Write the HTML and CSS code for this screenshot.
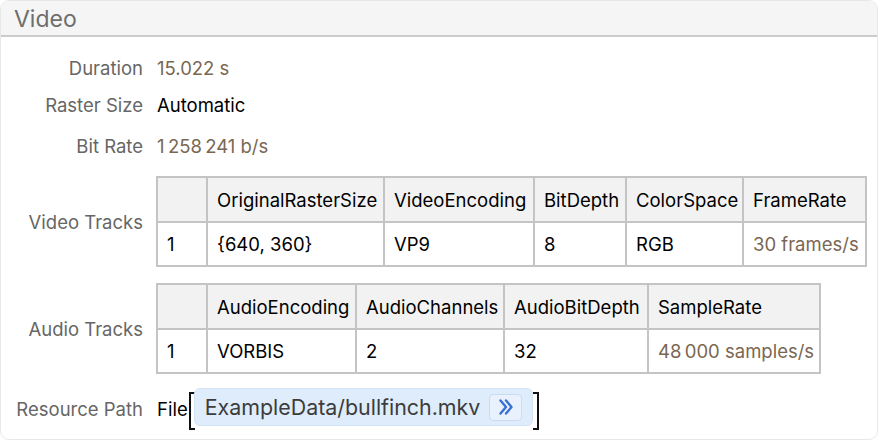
FILE: index.html
```html
<!DOCTYPE html>
<html>
<head>
<meta charset="utf-8">
<link rel="stylesheet" href="styles.css">
</head>
<body>
<div class="panel">
  <div class="head">Video</div>
  <div class="grid">
    <div class="lbl r1">Duration</div>
    <div class="val r1 qty">15.022 s</div>
    <div class="lbl r2">Raster Size</div>
    <div class="val r2">Automatic</div>
    <div class="lbl r3">Bit Rate</div>
    <div class="val r3 qty">1&#8239;258&#8239;241 b/s</div>
    <div class="lbl r4">Video Tracks</div>
    <div class="val r4">
      <table class="tbl">
        <tr class="th"><td class="idx"></td><td class="c1">OriginalRasterSize</td><td class="c2">VideoEncoding</td><td class="c3">BitDepth</td><td class="c4">ColorSpace</td><td class="c5">FrameRate</td></tr>
        <tr class="td"><td class="idx">1</td><td>{640, 360}</td><td>VP9</td><td>8</td><td>RGB</td><td class="qty">30 frames/s</td></tr>
      </table>
    </div>
    <div class="lbl r5">Audio Tracks</div>
    <div class="val r5">
      <table class="tbl">
        <tr class="th"><td class="idx"></td><td class="a1">AudioEncoding</td><td class="a2">AudioChannels</td><td class="a3">AudioBitDepth</td><td class="a4">SampleRate</td></tr>
        <tr class="td"><td class="idx">1</td><td>VORBIS</td><td>2</td><td>32</td><td class="qty">48&#8239;000 samples/s</td></tr>
      </table>
    </div>
    <div class="lbl r6">Resource Path</div>
    <div class="val r6 res">
      <span class="file">File</span>
      <span class="brk left"></span>
      <span class="pathbox">
        <span class="path">ExampleData/bullfinch.mkv</span>
        <span class="btn"><svg width="18" height="18" viewBox="0 0 18 18"><path d="M3.5 2.5 L9 9 L3.5 15.5 M9 2.5 L14.5 9 L9 15.5" fill="none" stroke="#3b6fd4" stroke-width="2.4" stroke-linecap="round" stroke-linejoin="round"/></svg></span>
      </span>
      <span class="brk right"></span>
    </div>
  </div>
</div>
</body>
</html>
```
FILE: styles.css
```css
html, body { margin: 0; padding: 0; background: #fff; }
body { font-family: Inter, "Noto Sans", sans-serif; font-size: 18.5px; color: #000; }
.panel {
  width: 878px; height: 440px; box-sizing: border-box;
  border: 1px solid #e8e8e8; border-radius: 9px; overflow: hidden;
}
.head {
  height: 34px; background: #f5f5f5; border-bottom: 2px solid #cbcbcb;
  color: #6e6e6e; font-size: 23px; line-height: 36px; padding-left: 13px;
}
.grid {
  display: grid; grid-template-columns: 142px auto; column-gap: 14px;
  grid-template-rows: 36px 38px 44px auto auto auto;
  padding-top: 13px;
}
.lbl { color: #666; text-align: right; align-self: center; }
.val { align-self: center; justify-self: start; }
.qty { color: #7a6753; }
.r4 { margin-top: 8px; }
.r5 { margin-top: 16px; }
.r6 { margin-top: 14px; }
.val.r4, .val.r5 { margin-left: -1px; }
.lbl.r6 { line-height: 42px; }
.tbl { border-collapse: collapse; }
.tbl td { border: 2px solid #c4c4c4; padding: 0 0 0 9px; white-space: nowrap; text-align: left; }
.tbl .th td { background: #f2f2f2; height: 43px; }
.tbl .td td { height: 42px; }
.tbl .idx { width: 39px; }
.c1 { width: 166px; } .c2 { width: 139px; } .c3 { width: 81px; } .c4 { width: 106px; } .c5 { width: 112px; }
.a1 { width: 138px; } .a2 { width: 137px; } .a3 { width: 133px; } .a4 { width: 161px; }
.res { display: flex; align-items: flex-start; height: 42px; }
.file { color: #000; line-height: 42px; }
.brk { display: block; width: 6px; height: 38px; border: 2px solid #111; box-sizing: border-box; margin-top: 4px; }
.brk.left { border-right: none; margin-left: 1px; }
.brk.right { border-left: none; }
.pathbox {
  display: flex; align-items: center; height: 38px; box-sizing: border-box;
  background: #dfecfb; border: 1px solid #d2e3f7; border-radius: 6px;
  padding: 0 10px 0 10px; margin: 0 0 0 -1px;
}
.path { font-size: 21.4px; color: #3c3c3c; }
.btn {
  display: flex; align-items: center; justify-content: center;
  width: 33px; height: 27px; box-sizing: border-box; margin-left: 9px;
  background: #e9f1fc; border: 1px solid #cadcf3; border-radius: 4px;
}
```
